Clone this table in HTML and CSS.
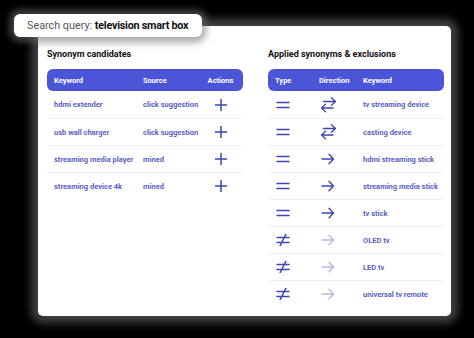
FILE: index.html
```html
<!DOCTYPE html>
<html>
<head>
<meta charset="utf-8">
<link rel="stylesheet" href="styles.css">
</head>
<body>
<div class="stage">
  <div class="search"><span class="label">Search query: </span><b>television smart box</b></div>
  <div class="card">
    <section class="panel left">
      <h2>Synonym candidates</h2>
      <div class="table cand">
        <div class="head"><span>Keyword</span><span>Source</span><span class="center">Actions</span></div>
        <div class="row"><span>hdmi extender</span><span>click suggestion</span><span class="center"><svg class="plus" viewBox="0 0 12 12"><path d="M6 0V12M0 6H12"/></svg></span></div>
        <div class="row"><span>usb wall charger</span><span>click suggestion</span><span class="center"><svg class="plus" viewBox="0 0 12 12"><path d="M6 0V12M0 6H12"/></svg></span></div>
        <div class="row"><span>streaming media player</span><span>mined</span><span class="center"><svg class="plus" viewBox="0 0 12 12"><path d="M6 0V12M0 6H12"/></svg></span></div>
        <div class="row"><span>streaming device 4k</span><span>mined</span><span class="center"><svg class="plus" viewBox="0 0 12 12"><path d="M6 0V12M0 6H12"/></svg></span></div>
      </div>
    </section>
    <section class="panel right">
      <h2>Applied synonyms &amp; exclusions</h2>
      <div class="table applied">
        <div class="head"><span>Type</span><span>Direction</span><span>Keyword</span></div>
        <div class="row"><span><svg class="eq" viewBox="0 0 14 12"><path d="M1 3.5H13M1 8.5H13"/></svg></span><span><svg class="bi" viewBox="0 0 17 16"><path d="M3.5 4.5H15.5M11.5 0.8L15.5 4.5L11.5 8.2M13 11H1.5M5.5 7.3L1.5 11L5.5 14.7"/></svg></span><span>tv streaming device</span></div>
        <div class="row"><span><svg class="eq" viewBox="0 0 14 12"><path d="M1 3.5H13M1 8.5H13"/></svg></span><span><svg class="bi" viewBox="0 0 17 16"><path d="M3.5 4.5H15.5M11.5 0.8L15.5 4.5L11.5 8.2M13 11H1.5M5.5 7.3L1.5 11L5.5 14.7"/></svg></span><span>casting device</span></div>
        <div class="row"><span><svg class="eq" viewBox="0 0 14 12"><path d="M1 3.5H13M1 8.5H13"/></svg></span><span><svg class="arr" viewBox="0 0 14 12"><path d="M1 6H12.5M8 1.3L12.5 6L8 10.7"/></svg></span><span>hdmi streaming stick</span></div>
        <div class="row"><span><svg class="eq" viewBox="0 0 14 12"><path d="M1 3.5H13M1 8.5H13"/></svg></span><span><svg class="arr" viewBox="0 0 14 12"><path d="M1 6H12.5M8 1.3L12.5 6L8 10.7"/></svg></span><span>streaming media stick</span></div>
        <div class="row"><span><svg class="eq" viewBox="0 0 14 12"><path d="M1 3.5H13M1 8.5H13"/></svg></span><span><svg class="arr" viewBox="0 0 14 12"><path d="M1 6H12.5M8 1.3L12.5 6L8 10.7"/></svg></span><span>tv stick</span></div>
        <div class="row"><span><svg class="eq" viewBox="0 0 14 12"><path d="M1 3.5H13M1 8.5H13M10 0L4 12"/></svg></span><span><svg class="arr faint" viewBox="0 0 14 12"><path d="M1 6H12.5M8 1.3L12.5 6L8 10.7"/></svg></span><span>OLED tv</span></div>
        <div class="row"><span><svg class="eq" viewBox="0 0 14 12"><path d="M1 3.5H13M1 8.5H13M10 0L4 12"/></svg></span><span><svg class="arr faint" viewBox="0 0 14 12"><path d="M1 6H12.5M8 1.3L12.5 6L8 10.7"/></svg></span><span>LED tv</span></div>
        <div class="row"><span><svg class="eq" viewBox="0 0 14 12"><path d="M1 3.5H13M1 8.5H13M10 0L4 12"/></svg></span><span><svg class="arr faint" viewBox="0 0 14 12"><path d="M1 6H12.5M8 1.3L12.5 6L8 10.7"/></svg></span><span>universal tv remote</span></div>
      </div>
    </section>
  </div>
</div>
</body>
</html>
```
FILE: styles.css
```css
html, body {
  margin: 0;
  padding: 0;
  background: #000;
  width: 474px;
  height: 338px;
  overflow: hidden;
  font-family: Roboto, "Noto Sans", sans-serif;
}
.stage {
  position: relative;
  padding: 26px 0 0 38px;
}
.search {
  position: absolute;
  left: 14px;
  top: 14px;
  width: 188px;
  height: 23px;
  box-sizing: border-box;
  padding-left: 13px;
  background: #fff;
  border-radius: 6px;
  font-size: 10.8px;
  line-height: 23px;
  white-space: nowrap;
  color: #111;
  box-shadow: 0 0 6px 5px rgba(120,120,120,0.5), 0 6px 10px rgba(0,0,0,0.12);
  z-index: 2;
}
.search .label { color: #555; }
.search b { font-weight: 700; letter-spacing: -0.25px; }
.card {
  width: 413px;
  height: 290px;
  box-sizing: border-box;
  background: #fff;
  border-radius: 5px;
  box-shadow: 0 0 8px 7px rgba(100,100,100,0.65);
  display: grid;
  grid-template-columns: 196px 176px;
  column-gap: 25px;
  padding: 21px 7px 0 9px;
}
h2 {
  margin: 0 0 8px;
  font-size: 9px;
  line-height: 13px;
  font-weight: 700;
  color: #111;
  padding-top: 1px;
  white-space: nowrap;
}
.head {
  display: grid;
  height: 22px;
  align-items: center;
  background: #4b55d8;
  border-radius: 6px;
  color: #fff;
  font-weight: 700;
  font-size: 7.5px;
  padding: 0 7px;
}
.row {
  display: grid;
  height: 27px;
  align-items: center;
  padding: 0 7px;
  font-size: 7.5px;
  font-weight: 700;
  color: #5a5fc4;
  border-top: 1px solid #eeeef3;
  box-sizing: border-box;
  white-space: nowrap;
}
.head + .row { border-top: none; }
.cand .head, .cand .row { grid-template-columns: 89px 62px 31px; }
.applied .head, .applied .row { grid-template-columns: 44px 44px 1fr; }
.center { text-align: center; }
.row span { display: flex; align-items: center; }
.row span.center { justify-content: center; }
svg { fill: none; stroke: #3d46b3; stroke-linecap: round; stroke-linejoin: round; display: block; }
.plus { width: 12px; height: 12px; stroke-width: 1.5; }
.eq { width: 14px; height: 12px; stroke-width: 1.5; margin-left: 1px; }
.bi { width: 17px; height: 16px; stroke-width: 1.3; margin-left: 1px; }
.arr { width: 14px; height: 12px; stroke-width: 1.4; margin-left: 2px; }
.arr.faint { stroke: #b4b8e6; }
```
